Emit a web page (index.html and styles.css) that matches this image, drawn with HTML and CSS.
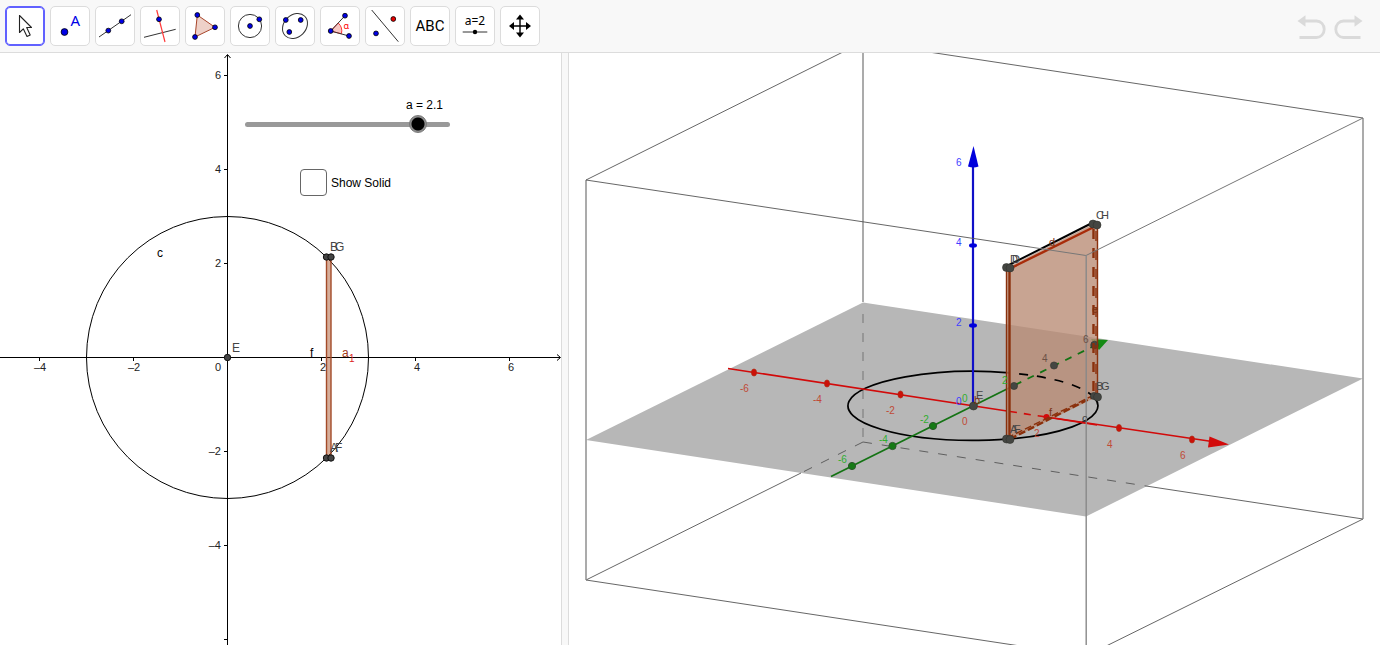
FILE: index.html
```html
<!DOCTYPE html>
<html lang="en">
<head>
<meta charset="utf-8">
<title>3D Calculator</title>
<link rel="stylesheet" href="styles.css">
</head>
<body>
<div class="app">
  <header class="toolbar">
    <div class="tools" role="toolbar" aria-label="Tools">
      <button class="tool selected" type="button" aria-label="Move"><svg class="icon" viewBox="1 1 38 38"><path class="cursor" d="M14.5 9.5V26.5L18.3 22.8L22 30.5L25.2 29L21.7 21.5H26.5Z"/></svg></button>
      <button class="tool" type="button" aria-label="Point"><svg class="icon" viewBox="1 1 38 38"><circle class="dot" cx="14.5" cy="26" r="3.4"/><text class="point-letter" x="20.500" y="20">A</text></svg></button>
      <button class="tool" type="button" aria-label="Line"><svg class="icon" viewBox="1 1 38 38"><path class="thin" d="M4 31L36 8.7"/><circle class="dot" cx="13.3" cy="24.6" r="2.4"/><circle class="dot" cx="26.7" cy="15.3" r="2.4"/></svg></button>
      <button class="tool" type="button" aria-label="Perpendicular line"><svg class="icon" viewBox="1 1 38 38"><path class="thin" d="M4 31.3L35.7 23.3"/><path class="thin red" d="M16.7 4L25 36"/><circle class="dot" cx="19" cy="13.3" r="2.4"/></svg></button>
      <button class="tool" type="button" aria-label="Polygon"><svg class="icon" viewBox="1 1 38 38"><path class="poly" d="M12.3 9L30 21.3L10 31Z"/><circle class="dot" cx="12.3" cy="9" r="2.4"/><circle class="dot" cx="30" cy="21.3" r="2.4"/><circle class="dot" cx="10" cy="31" r="2.4"/></svg></button>
      <button class="tool" type="button" aria-label="Circle with center"><svg class="icon" viewBox="1 1 38 38"><circle class="thin" cx="20" cy="20" r="11.6"/><circle class="dot" cx="20" cy="20" r="2.4"/><circle class="dot" cx="29.3" cy="13.3" r="2.4"/></svg></button>
      <button class="tool" type="button" aria-label="Ellipse"><svg class="icon" viewBox="1 1 38 38"><ellipse class="thin" cx="20" cy="20" rx="13.8" ry="11" transform="rotate(-45 20 20)"/><circle class="dot" cx="10.8" cy="14" r="2.4"/><circle class="dot" cx="25.7" cy="14" r="2.4"/><circle class="dot" cx="14.3" cy="26" r="2.4"/></svg></button>
      <button class="tool" type="button" aria-label="Angle"><svg class="icon" viewBox="1 1 38 38"><path class="wedge" d="M10.7 25L18.2 17A11 11 0 0 1 21.4 27.8Z"/><path class="thin" d="M25 9.7L10.7 25L29 30"/><circle class="dot" cx="25" cy="9.7" r="2.4"/><circle class="dot" cx="10.7" cy="25" r="2.4"/><circle class="dot" cx="29" cy="30" r="2.4"/><text class="alpha" x="23.500" y="23">α</text></svg></button>
      <button class="tool" type="button" aria-label="Reflect about line"><svg class="icon" viewBox="1 1 38 38"><path class="thin" d="M6.7 4L33.3 35.7"/><circle class="dot red-dot" cx="28.3" cy="13" r="2.4"/><circle class="dot" cx="11" cy="27.4" r="2.4"/></svg></button>
      <button class="tool" type="button" aria-label="Text"><svg class="icon" viewBox="1 1 38 38"><text class="abc" x="20" y="25">ABC</text></svg></button>
      <button class="tool" type="button" aria-label="Slider"><svg class="icon" viewBox="1 1 38 38"><text class="formula" x="20" y="19">a=2</text><path class="thin" d="M7.7 26H32.3"/><circle cx="20" cy="26" r="2.2"/></svg></button>
      <button class="tool" type="button" aria-label="Move graphics view"><svg class="icon" viewBox="1 1 38 38"><path class="cross" d="M12 20H28M20 12V28"/><path d="M9 20L14 16V24ZM31 20L26 16V24ZM20 8.5L16 13.5H24ZM20 31.5L16 26.5H24Z"/></svg></button>
    </div>
    <div class="history">
      <button class="step" type="button" aria-label="Undo"><svg class="step-icon" viewBox="0 0 36 40"><path class="bend" d="M11 15H22.5a7.5 8 0 0 1 0 16.5H5.5"/><path class="head" d="M3.5 15L11.5 9.3V20.7Z"/></svg></button>
      <button class="step" type="button" aria-label="Redo"><svg class="step-icon" viewBox="0 0 36 40"><path class="bend" d="M25 15H13.500a7.500 8 0 0 0 0 16.500H30.500"/><path class="head" d="M32.500 15L24.500 9.300V20.700Z"/></svg></button>
    </div>
  </header>

  <main class="views">
    <section class="view view-2d" aria-label="Graphics view">
      <svg class="plot" viewBox="0 53 561 592" preserveAspectRatio="xMinYMin slice">
        <path class="axis" d="M0 357.500H560M227.500 55V645"/>
        <path class="axis" d="M557 354.500L560.500 357.500L557 360.500M224.500 58L227.500 54.500L230.500 58"/>
        <path class="axis" d="M39.500 358V361M133.500 358V361M321.500 358V361M415.500 358V361M509.500 358V361"/>
        <path class="axis" d="M224 75.500H227M224 169.500H227M224 263.500H227M224 451.500H227M224 545.500H227M224 639.500H227"/>
        <g class="tick mid"><text x="40" y="371">–4</text><text x="134" y="371">–2</text><text x="323" y="371">2</text><text x="417" y="371">4</text><text x="511" y="371">6</text></g>
        <g class="tick end"><text x="221" y="371">0</text><text x="221" y="79">6</text><text x="221" y="173">4</text><text x="221" y="267">2</text><text x="221" y="455">–2</text><text x="221" y="549">–4</text></g>
        <circle class="curve" cx="227.500" cy="357.500" r="141"/>
        <rect class="strip" x="326.500" y="257" width="4.500" height="201"/>
        <g class="pt"><circle cx="227.500" cy="357.500" r="3.200"/><circle cx="326.500" cy="257" r="3.200"/><circle cx="331" cy="257" r="3.200"/><circle cx="326.500" cy="458" r="3.200"/><circle cx="331" cy="458" r="3.200"/></g>
        <g class="name"><text x="232" y="352">E</text><text x="330" y="251">B</text><text x="335" y="251">G</text><text x="330" y="452">A</text><text x="335" y="452">F</text></g>
        <g class="name dark"><text x="157" y="257">c</text><text x="310" y="357">f</text></g>
        <g class="name brown"><text x="342" y="357">a</text><text class="sub" x="349" y="362">1</text></g>
      </svg>
      <label class="slider-label" for="a">a = 2.1</label>
      <div class="slider"><input id="a" type="range" min="-3" max="3" step="0.1" value="2.1"></div>
      <label class="check"><input type="checkbox">Show Solid</label>
    </section>

    <div class="splitter" role="separator" aria-orientation="vertical"></div>

    <section class="view view-3d" aria-label="3D graphics view">
      <svg class="plot" viewBox="569 53 811 592" preserveAspectRatio="xMinYMin slice">
        <path class="plane" d="M586 440L863 302.500L1363 378.500L1086 516.500Z"/>
        <path class="edge" d="M586 180L863 42L1363 118M586 580L801 473M1146 486L1363 519L1086 656L586 580"/>
        <path class="edge up" d="M863 42V302M586 180V580M1363 118V519"/>
        <path class="edge hidden" d="M863 442L801 473M863 442L1146 486"/>
        <path class="edge up hidden" d="M863 314V442"/>

        <path class="ring" d="M1095 398.400A125 34.500 0 1 1 1010 372.900"/>
        <path class="x-axis" d="M728 368.500L1007 411M1040 416L1212 441.500"/>
        <path class="x-head" d="M1229 444.500L1208 447.500L1209.500 436.500Z"/>
        <g class="x-dot"><ellipse cx="754" cy="372.500" rx="2.600" ry="3.600"/><ellipse cx="827" cy="383.500" rx="2.600" ry="3.600"/><ellipse cx="900.500" cy="394.500" rx="2.600" ry="3.600"/><ellipse cx="1119" cy="428" rx="2.600" ry="3.600"/><ellipse cx="1192" cy="439.500" rx="2.600" ry="3.600"/></g>
        <path class="y-axis" d="M831 476.500L1013 386"/>
        <path class="y-head" d="M1108 340L1091 339L1099 350Z"/>
        <g class="y-dot"><circle cx="852" cy="466" r="3.600"/><circle cx="892.500" cy="446" r="3.600"/><circle cx="933" cy="426" r="3.600"/></g>
        <path class="z-axis" d="M973 405V164"/>
        <path class="z-head" d="M973.500 146L978.500 166.500Q973.500 168.500 968 166.500Z"/>
        <g class="z-head"><ellipse cx="973" cy="325.500" rx="4" ry="2.200"/><ellipse cx="973" cy="245.500" rx="4" ry="2.200"/></g>
        <path class="edge" d="M586 180L1030 247"/>
        <circle class="pt3" cx="973.500" cy="406" r="4"/>

        <path class="face" d="M1007 439V267.500L1093 224L1097.500 225V396.500L1011 439Z"/>
        <path class="ring hidden-ring" d="M1010 372.900A125 34.500 0 0 1 1095 398.400"/>
        <path class="y-axis behind" d="M1015 385L1094 346"/>
        <path class="x-axis behind" d="M1010 411.500L1046 417"/>
        <path class="x-axis" d="M1046 417L1097 425"/>
        <circle class="x-head" cx="1046.500" cy="417" r="3"/>
        <g class="pt3"><circle cx="1014" cy="386" r="3.600"/><circle cx="1054" cy="365.500" r="3.600"/><circle cx="1094.500" cy="345" r="3.800"/></g>
        <path class="side thin-side" d="M1006.500 267V439M1097.500 225V397"/>
        <path class="side" d="M1009.500 268V439"/>
        <path class="side hidden-side" d="M1093.500 229V396"/>
        <path class="side thin-side hidden-side" d="M1096 231V396"/>
        <path class="black-edge" d="M1007 266L1093 222.500"/>
        <path class="side top-side" d="M1010 268.500L1096 226"/>
        <path class="side foot" d="M1010 439L1094 396.500"/>
        <path class="side thin-side foot" d="M1007 438L1093 395.500"/>
        <path class="edge front" d="M1030 247L1086 255.500L1363 118"/>
        <path class="edge up" d="M1086.200 255V656"/>
        <g class="pt3"><circle cx="1006.500" cy="267.500" r="4"/><circle cx="1010" cy="268" r="4"/><circle cx="1093" cy="224" r="4"/><circle cx="1097" cy="225" r="4"/><circle cx="1006.500" cy="439" r="4"/><circle cx="1010" cy="439.500" r="4"/><circle cx="1094" cy="396" r="3.600"/><circle cx="1097.500" cy="397" r="4"/></g>

        <g class="tick3 x-text"><text x="740" y="392">-6</text><text x="813" y="403">-4</text><text x="886" y="414">-2</text><text x="962" y="425">0</text><text x="1034" y="437">2</text><text x="1107" y="448">4</text><text x="1180" y="459">6</text></g>
        <g class="tick3 y-text"><text x="838" y="463">-6</text><text x="879" y="443">-4</text><text x="920" y="423">-2</text><text x="962" y="402">0</text><text x="1002" y="384">2</text></g>
        <g class="tick3 covered"><text x="1042" y="362">4</text><text x="1083" y="343">6</text></g>
        <g class="tick3 z-text"><text x="956" y="166">6</text><text x="956" y="246">4</text><text x="956" y="326">2</text><text x="956" y="405">0</text></g>
        <g class="name name3"><text x="976" y="399">E</text><text x="1010" y="263">D</text><text x="1012" y="263">D</text><text x="1096" y="219">C</text><text x="1101" y="219">H</text><text x="1010" y="433">A</text><text x="1014" y="433">F</text><text x="1096" y="390">B</text><text x="1101" y="390">G</text><text x="1082" y="422">c</text></g>
        <g class="name name3 side-name"><text x="1049" y="246">d</text><text x="1092" y="313">e</text><text x="1049" y="416">f</text><text x="974" y="404">b</text></g>
      </svg>
    </section>
  </main>
</div>
</body>
</html>
```
FILE: styles.css
```css
* { box-sizing: border-box; }

body {
  margin: 0;
  background: #fff;
  font-family: "Liberation Sans", Arial, sans-serif;
}

.app {
  display: flex;
  flex-direction: column;
  height: 100vh;
  padding: 0 2px 2px 0;
  overflow: hidden;
}

/* Toolbar */
.toolbar {
  display: flex;
  justify-content: space-between;
  align-items: center;
  padding: 6px 14px 6px 5px;
  background: #f8f8f8;
  border-bottom: 1px solid #dcdcdc;
}
.tools { display: flex; gap: 5px; }
.tool {
  display: grid;
  place-items: center;
  width: 40px;
  height: 40px;
  padding: 0;
  border: 1px solid #dcdcdc;
  border-radius: 5px;
  background: #fff;
}
.tool.selected { border-color: #6161ff; box-shadow: inset 0 0 0 1px #6161ff; }
.icon { width: 38px; height: 38px; }
.cursor { fill: #fff; stroke: #222; stroke-width: 1.1; stroke-linejoin: round; }
.thin { fill: none; stroke: #333; stroke-width: 1; }
.thin.red { stroke: #ff3b3b; stroke-width: 1.2; }
.dot { fill: #0000e6; stroke: #000; stroke-width: 0.8; }
.red-dot { fill: #e60000; }
.poly { fill: #eed1c8; stroke: #a8452a; stroke-width: 1; }
.wedge { fill: #f8c8c4; stroke: #f33; stroke-width: 1; }
.point-letter, .formula, .alpha { font-family: "Noto Sans", sans-serif; }
.point-letter { font-size: 15px; fill: #0000e6; }
.alpha { font-size: 9px; fill: #f00; }
.abc { font-family: Roboto, sans-serif; font-size: 15px; text-anchor: middle; }
.formula { font-size: 12px; text-anchor: middle; }
.cross { stroke: #000; stroke-width: 1.4; }

.history { display: flex; }
.step {
  width: 36px;
  height: 40px;
  padding: 0;
  border: 0;
  background: none;
}
.step-icon { display: block; width: 36px; height: 40px; }
.bend { fill: none; stroke: #dadada; stroke-width: 2.8; }
.head { fill: #dadada; }

/* Views */
.views { display: flex; flex: 1; min-height: 0; }
.view { position: relative; min-width: 0; overflow: hidden; }
.view-2d { flex: 561 1 0; }
.view-3d { flex: 811 1 0; }
.plot { display: block; width: 100%; height: 100%; }
.splitter {
  flex: none;
  width: 8px;
  background: #f8f8f8;
  border: solid #dcdcdc;
  border-width: 0 1px;
}

/* 2D plot */
.axis { fill: none; stroke: #000; stroke-width: 1; }
.tick { font-size: 11px; fill: #222; }
.mid { text-anchor: middle; }
.end { text-anchor: end; }
.curve { fill: none; stroke: #000; stroke-width: 1; }
.strip { fill: #993300; fill-opacity: 0.4; stroke: #a34a28; stroke-width: 1.4; }
.pt { fill: #444; stroke: #111; stroke-width: 1; }
.name { font-size: 12px; fill: #444; }
.name.dark { fill: #000; }
.name.brown { fill: #a33a1a; }
.sub { font-size: 10px; fill: #d22; }

/* Widgets placed on the drawing pad */
.slider-label, .check { font-size: 12px; line-height: 16px; color: #000; }
.slider-label { position: absolute; left: 406px; top: 44px; }
.slider { position: absolute; left: 239px; top: 62px; width: 218px; height: 18px; }
.slider::before {
  content: "";
  position: absolute;
  inset: 7px 7px 6px 6px;
  border-radius: 3px;
  background: #999;
}
.slider input {
  position: relative;
  display: block;
  width: 100%;
  height: 18px;
  margin: 0;
  appearance: none;
  background: none;
}
.slider input::-webkit-slider-thumb {
  appearance: none;
  width: 18px;
  height: 18px;
  border: 1px solid #777;
  border-radius: 50%;
  background: radial-gradient(circle, #000 0 6px, #8c8c8c 7px);
}
.check {
  position: absolute;
  left: 300px;
  top: 116px;
  display: flex;
  align-items: center;
  gap: 4px;
}
.check input {
  width: 27px;
  height: 27px;
  margin: 0;
  appearance: none;
  border: 1px solid #666;
  border-radius: 4px;
  background: #fff;
}

/* 3D plot */
.plane { fill: #b7b7b7; }
.edge { fill: none; stroke: #555; stroke-width: 0.9; }
.edge.up { stroke: #888; stroke-width: 1.4; }
.edge.front { stroke: #777; stroke-width: 1; }
.hidden { stroke-dasharray: 9 10; }
.ring { fill: none; stroke: #000; stroke-width: 1.7; }
.hidden-ring { stroke-dasharray: 9 9; stroke-dashoffset: 9; }
.x-axis { fill: none; stroke: #d20a0a; stroke-width: 1.6; }
.x-head { fill: #d20a0a; }
.x-dot { fill: #cc1008; stroke: #a82a10; stroke-width: 0.6; }
.y-axis { fill: none; stroke: #147314; stroke-width: 1.8; }
.y-head { fill: #148a14; }
.y-dot { fill: #157a15; stroke: #2b572b; stroke-width: 1; }
.behind { stroke-dasharray: 7 7; }
.z-axis { stroke: #1010c8; stroke-width: 2.2; }
.z-head { fill: #0000dc; }
.face { fill: #b88a73; fill-opacity: 0.78; }
.side { fill: none; stroke: #8a300c; stroke-width: 2.4; }
.thin-side { stroke-width: 1.4; }
.hidden-side { stroke-dasharray: 10 9; }
.top-side { stroke: #a82c0a; }
.foot { stroke-dasharray: 7 3; }
.black-edge { stroke: #000; stroke-width: 2; }
.pt3 { fill: #444642; stroke: #30322e; stroke-width: 0.6; }
.name3 { font-size: 11px; }
.tick3 { font-size: 10px; }
.x-text { fill: #c04a36; }
.y-text { fill: #2fae2f; }
.z-text { fill: #4040ff; }
.covered { fill: #6b5045; }
.side-name { fill: #7a3215; }
```
